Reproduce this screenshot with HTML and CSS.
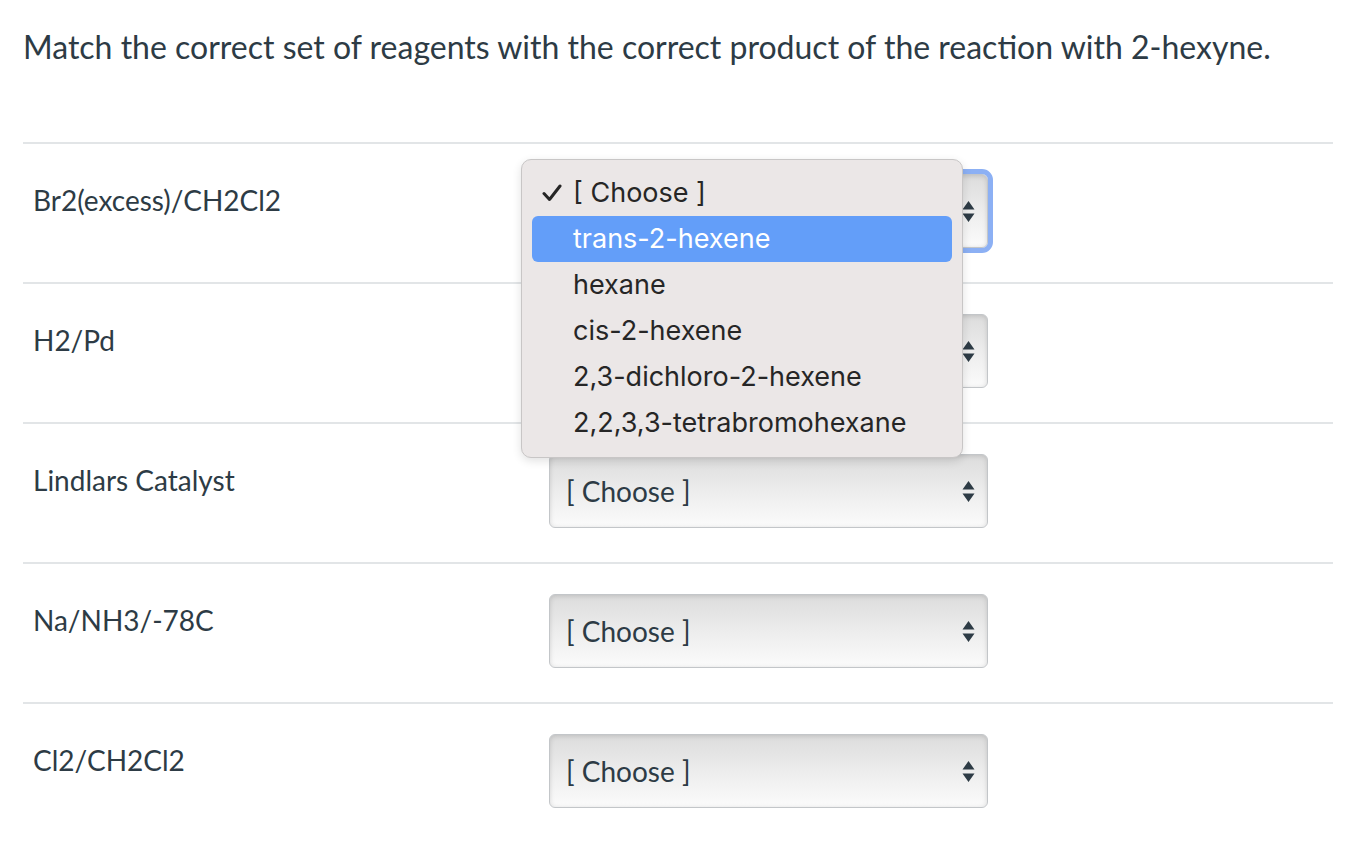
FILE: index.html
```html
<!DOCTYPE html>
<html lang="en">
<head>
    <meta charset="UTF-8">
    <title>Matching question</title>
    <link rel="stylesheet" href="styles.css">
</head>
<body>
    <div class="question">
        <p class="question-text">Match the correct set of reagents with the correct product of the reaction with 2-hexyne.</p>

        <div class="answers">
            <div class="answer">
                <div class="answer-label">Br2(excess)/CH2Cl2</div>
                <div class="select-wrap focused">
                    <div class="select-box">[ Choose ]</div>
                    <svg class="arrows" width="13" height="23" viewBox="0 0 13 23"><path d="M6.5 1 L12.5 9.5 L0.5 9.5 Z M0.5 13.5 L12.5 13.5 L6.5 22 Z" fill="#2d3b45"/></svg>
                    <ul class="popup">
                        <li class="checked">
                            <svg class="check" width="20" height="18" viewBox="0 0 20 18"><path d="M2 9.5 L7.5 15.5 L18 2" fill="none" stroke="#262626" stroke-width="3" stroke-linecap="round" stroke-linejoin="round"/></svg>
                            [ Choose ]
                        </li>
                        <li class="active">trans-2-hexene</li>
                        <li>hexane</li>
                        <li>cis-2-hexene</li>
                        <li>2,3-dichloro-2-hexene</li>
                        <li>2,2,3,3-tetrabromohexane</li>
                    </ul>
                </div>
            </div>

            <div class="answer">
                <div class="answer-label">H2/Pd</div>
                <div class="select-wrap">
                    <div class="select-box">[ Choose ]</div>
                    <svg class="arrows" width="13" height="23" viewBox="0 0 13 23"><path d="M6.5 1 L12.5 9.5 L0.5 9.5 Z M0.5 13.5 L12.5 13.5 L6.5 22 Z" fill="#2d3b45"/></svg>
                </div>
            </div>

            <div class="answer">
                <div class="answer-label">Lindlars Catalyst</div>
                <div class="select-wrap">
                    <div class="select-box">[ Choose ]</div>
                    <svg class="arrows" width="13" height="23" viewBox="0 0 13 23"><path d="M6.5 1 L12.5 9.5 L0.5 9.5 Z M0.5 13.5 L12.5 13.5 L6.5 22 Z" fill="#2d3b45"/></svg>
                </div>
            </div>

            <div class="answer">
                <div class="answer-label">Na/NH3/-78C</div>
                <div class="select-wrap">
                    <div class="select-box">[ Choose ]</div>
                    <svg class="arrows" width="13" height="23" viewBox="0 0 13 23"><path d="M6.5 1 L12.5 9.5 L0.5 9.5 Z M0.5 13.5 L12.5 13.5 L6.5 22 Z" fill="#2d3b45"/></svg>
                </div>
            </div>

            <div class="answer">
                <div class="answer-label">Cl2/CH2Cl2</div>
                <div class="select-wrap">
                    <div class="select-box">[ Choose ]</div>
                    <svg class="arrows" width="13" height="23" viewBox="0 0 13 23"><path d="M6.5 1 L12.5 9.5 L0.5 9.5 Z M0.5 13.5 L12.5 13.5 L6.5 22 Z" fill="#2d3b45"/></svg>
                </div>
            </div>
        </div>
    </div>
</body>
</html>
```

FILE: styles.css
```css
body {
    margin: 0;
    background-color: #ffffff;
    font-family: Lato, "Open Sans", sans-serif;
    color: #2d3b45;
}

.question {
    padding: 0 17px 0 23px;
}

.question-text {
    margin: 0;
    padding-top: 24px;
    font-size: 32px;
    line-height: 45px;
    height: 118px;
}

.answer {
    display: flex;
    align-items: flex-start;
    border-top: 2px solid #e2e5e7;
    padding: 30px 0 34px;
    height: 74px;
}

.answer-label {
    width: 516px;
    padding-left: 10px;
    margin-top: 8px;
    font-size: 28px;
    line-height: 36px;
}

.select-wrap {
    position: relative;
    width: 439px;
    height: 74px;
}

.select-box {
    box-sizing: border-box;
    height: 74px;
    padding: 18px 0 0 16px;
    font-size: 28px;
    line-height: 36px;
    border: 1px solid #c3c6c9;
    border-radius: 6px;
    background: linear-gradient(#dcdcdc, #eeeeee 55%, #fbfbfb);
    box-shadow: inset 0 1px 5px rgba(0, 0, 0, 0.14);
}

.focused .select-box {
    outline: 5px solid #8cb0f4;
    outline-offset: 0;
}

.arrows {
    position: absolute;
    right: 13px;
    top: 26px;
}

.popup {
    position: absolute;
    left: -28px;
    top: -15px;
    width: 442px;
    box-sizing: border-box;
    margin: 0;
    padding: 10px 10px 11px;
    list-style: none;
    background-color: #ebe7e7;
    border: 1px solid #c8c6c6;
    border-radius: 10px;
    box-shadow: 0 3px 10px rgba(0, 0, 0, 0.12);
    font-family: Inter, "Liberation Sans", sans-serif;
    font-size: 27px;
    color: #262626;
    z-index: 2;
}

.popup li {
    position: relative;
    height: 46px;
    line-height: 46px;
    padding-left: 41px;
    border-radius: 6px;
}

.check {
    position: absolute;
    left: 10px;
    top: 14px;
}

.popup li.active {
    background-color: #639ef9;
    color: #ffffff;
}
```
